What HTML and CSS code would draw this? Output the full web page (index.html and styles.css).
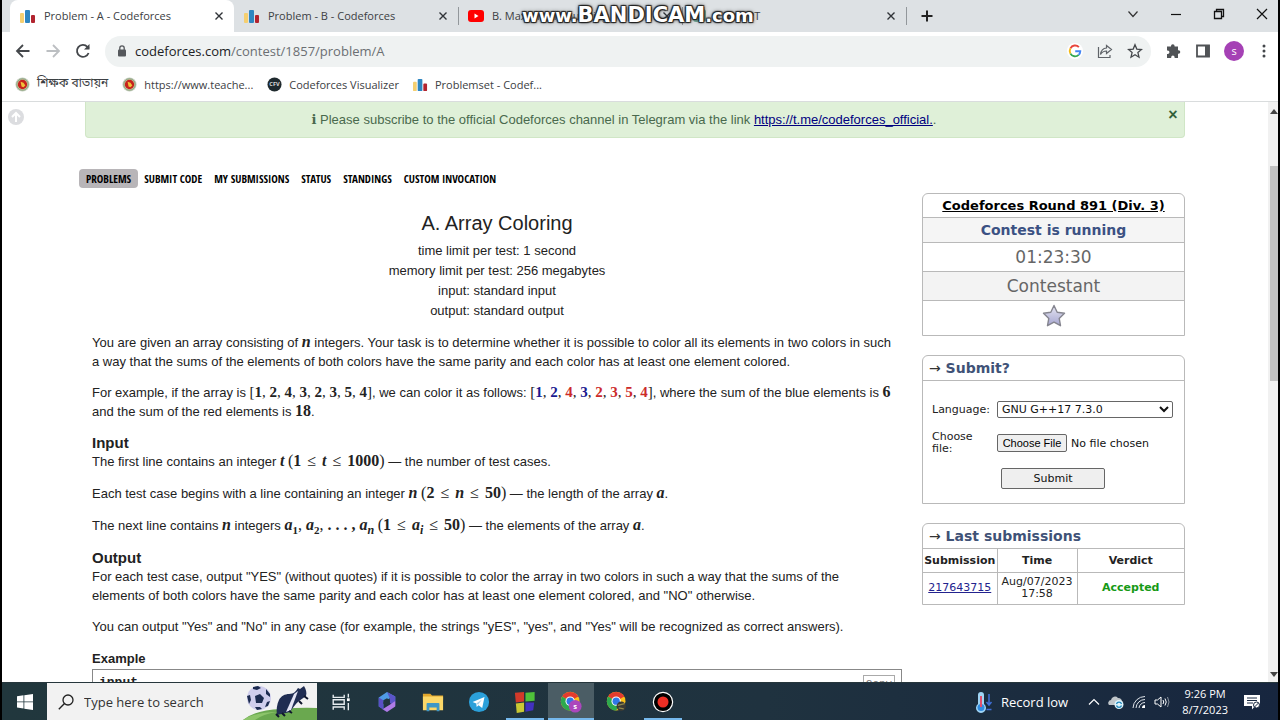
FILE: index.html
```html
<!doctype html>
<html lang="en">
    <head>
        <title>Problem - A - Codeforces</title>
        <meta charset="utf-8">
        <link rel="stylesheet" href="styles.css">
    </head>

    <body>
        <!-- shared icons -->
        <svg class="defs" width="0" height="0">
            <symbol id="cf" viewBox="0 0 16 16">
                <rect x="0" y="5" width="4" height="10" rx="1" fill="#f5cf70"/>
                <rect x="5" y="2" width="5" height="13" rx="1" fill="#2e86c1"/>
                <rect x="11" y="7" width="4" height="8" rx="1" fill="#b2242f"/>
            </symbol>
            <symbol id="close" viewBox="0 0 10 10">
                <path d="M1.5 1.5l7 7M8.5 1.5l-7 7" stroke="#303338" stroke-width="1.4" fill="none"/>
            </symbol>
            <symbol id="gov" viewBox="0 0 16 16">
                <circle cx="8" cy="8" r="7.5" fill="#c3cbbb"/>
                <circle cx="8" cy="8" r="6" fill="#e0d8b0" stroke="#7a9a6e" stroke-width="1"/>
                <circle cx="8" cy="8" r="5" fill="#c6231d"/>
                <path d="M6 5l3 1 2 3-2 2-2-1z" fill="#f0c23a"/>
            </symbol>
            <symbol id="chrome" viewBox="0 0 24 24">
                <circle cx="12" cy="12" r="11" fill="#fbc116"/>
                <path d="M12 12L2.5 6.5A11 11 0 0 1 21.5 6.5z" fill="#e33b2e"/>
                <path d="M12 12L2.5 6.5A11 11 0 0 0 12 23l4.5-8z" fill="#2da94f"/>
                <path d="M12 6.5h9.5" stroke="#e33b2e" stroke-width="1"/>
                <circle cx="12" cy="12" r="5.5" fill="#fff"/>
                <circle cx="12" cy="12" r="4.3" fill="#3078e8"/>
            </symbol>
        </svg>

        <div class="tabs">
            <div class="tab active">
                <svg class="fav"><use href="#cf"/></svg>
                <span>Problem - A - Codeforces</span>
                <button aria-label="Close tab"><svg><use href="#close"/></svg></button>
            </div>
            <div class="tab">
                <svg class="fav"><use href="#cf"/></svg>
                <span>Problem - B - Codeforces</span>
                <button aria-label="Close tab"><svg><use href="#close"/></svg></button>
            </div>
            <div class="tab line">
                <svg class="fav" viewBox="0 0 16 16"><rect y="2" width="16" height="12" rx="3" fill="#f00"/><path d="M6.5 5.5v5l4-2.5z" fill="#fff"/></svg>
                <span>B. Maximum Rounding</span>
                <button aria-label="Close tab"><svg><use href="#close"/></svg></button>
            </div>
            <div class="tab line">
                <svg class="fav" viewBox="0 0 16 16"><rect x="1" y="1" width="13" height="13" rx="3" fill="#6fa593"/></svg>
                <span>ChatGPT</span>
                <button aria-label="Close tab"><svg><use href="#close"/></svg></button>
            </div>
            <button class="newtab line" aria-label="New tab"><svg width="12" height="12" viewBox="0 0 12 12"><path d="M6 .5v11M.5 6h11" stroke="#222" stroke-width="2"/></svg></button>
            <div class="wincontrols">
                <svg viewBox="0 0 12 12"><path d="M1.5 3.5L6 8.5l4.5-5" fill="none" stroke="#333" stroke-width="1.2"/></svg>
                <svg viewBox="0 0 12 12"><path d="M1 6.5h10" stroke="#111" stroke-width="1.2"/></svg>
                <svg viewBox="0 0 12 12"><path d="M3.5 3.5V1.5h7v7h-2M1.5 3.5h7v7h-7z" fill="none" stroke="#111" stroke-width="1.3"/></svg>
                <svg viewBox="0 0 12 12"><path d="M1 1l10 10M11 1L1 11" fill="none" stroke="#111" stroke-width="1.2"/></svg>
            </div>
            <div class="watermark">www.<b>BANDICAM</b>.com</div>
        </div>

        <div class="toolbar">
            <svg class="nav" viewBox="0 0 16 16"><path d="M14.5 8H2M8 2L2 8l6 6" fill="none" stroke="#44474b" stroke-width="1.8"/></svg>
            <svg class="nav" viewBox="0 0 16 16"><path d="M1.5 8H14M8 2l6 6-6 6" fill="none" stroke="#bcbfc2" stroke-width="1.8"/></svg>
            <svg class="nav" viewBox="0 0 16 16"><path d="M13.6 10A6 6 0 1 1 12.4 3.8L14 5.5" fill="none" stroke="#44474b" stroke-width="1.8"/><path d="M14.5 1v5.5H9z" fill="#44474b"/></svg>
            <div class="omnibox">
                <div class="url">
                    <svg class="lock" viewBox="0 0 10 12"><rect x="1" y="4.5" width="8" height="7" rx="1" fill="#55585c"/><path d="M2.8 5V3a2.2 2.2 0 0 1 4.4 0v2" fill="none" stroke="#55585c" stroke-width="1.3"/></svg>
                    <div>codeforces.com<span>/contest/1857/problem/A</span></div>
                </div>
                <svg viewBox="0 0 14 14"><circle cx="7" cy="7" r="7" fill="#fff"/>
                    <g fill="none" stroke-width="1.7"><path d="M10.4 3.6A4.6 4.6 0 0 0 3 4.7" stroke="#e8453c"/><path d="M3 4.7A4.6 4.6 0 0 0 3 9.3" stroke="#f5b912"/><path d="M3 9.3A4.6 4.6 0 0 0 10.2 10.4" stroke="#34a853"/><path d="M10.2 10.4A4.6 4.6 0 0 0 11.6 7.2H7.2" stroke="#4285f4"/></g></svg>
                <svg viewBox="0 0 16 16"><path d="M1.5 4v10.5h11.5V12" fill="none" stroke="#5f6368" stroke-width="1.2"/><path d="M9.5 2.5l5 4-5 4V8C7 8 5 9 3.5 11.5 4 7.5 6 5.2 9.5 5z" fill="none" stroke="#5f6368" stroke-width="1.2"/></svg>
                <svg viewBox="0 0 16 16"><path d="M8 1.8l1.8 4.3 4.7.4-3.6 3.1 1.1 4.6L8 11.7l-4 2.5 1.1-4.6L1.5 6.5l4.7-.4z" fill="none" stroke="#44474b" stroke-width="1.3"/></svg>
            </div>
            <svg class="act" viewBox="0 0 16 16"><path d="M6 3a1.8 1.8 0 0 1 3.6 0v.5H13v3.7h.5a1.8 1.8 0 0 1 0 3.6H13V15H9.6v-.8a1.7 1.7 0 0 0-3.4 0v.8H2v-4h.7a1.7 1.7 0 0 0 0-3.5H2v-4h4z" fill="#505356"/></svg>
            <svg class="act" viewBox="0 0 16 16"><path d="M2 2.5h12v11H2z" fill="none" stroke="#505356" stroke-width="1.8"/><path d="M10 2h4.5v12H10z" fill="#505356"/></svg>
            <button class="avatar">s</button>
            <svg class="dots" viewBox="0 0 4 14"><g fill="#44474b"><circle cx="2" cy="2" r="1.5"/><circle cx="2" cy="7" r="1.5"/><circle cx="2" cy="12" r="1.5"/></g></svg>
        </div>

        <div class="bookmarks">
            <a href="#"><svg><use href="#gov"/></svg><span class="bn">শিক্ষক বাতায়ন</span></a>
            <a href="#"><svg><use href="#gov"/></svg>https://www.teache...</a>
            <a href="#"><svg viewBox="0 0 16 16"><circle cx="8" cy="8" r="7.5" fill="#1f2a2e"/><text x="8" y="10" text-anchor="middle" font-size="6" font-weight="bold" fill="#ddd">CFV</text></svg>Codeforces Visualizer</a>
            <a href="#"><svg><use href="#cf"/></svg>Problemset - Codef...</a>
        </div>

        <div class="view">
            <svg class="totop" width="16" height="16" viewBox="0 0 16 16"><circle cx="8" cy="8" r="8" fill="#dcdde0"/><path d="M8 13V4M4 8l4-4 4 4" fill="none" stroke="#fff" stroke-width="2"/></svg>
            <div class="page">
                <div class="notice">
                    <p><i>i</i> Please subscribe to the official Codeforces channel in Telegram via the link <a href="#">https://t.me/codeforces_official.</a>.</p>
                    <button aria-label="Close notice">×</button>
                </div>

                <nav class="menu">
                    <a href="#" class="current">PROBLEMS</a>
                    <a href="#">SUBMIT CODE</a>
                    <a href="#">MY SUBMISSIONS</a>
                    <a href="#">STATUS</a>
                    <a href="#">STANDINGS</a>
                    <a href="#">CUSTOM INVOCATION</a>
                </nav>

                <div class="columns">
                    <main class="problem">
                        <div class="head">
                            <h1>A. Array Coloring</h1>
                            <div>time limit per test: 1 second</div>
                            <div>memory limit per test: 256 megabytes</div>
                            <div>input: standard input</div>
                            <div>output: standard output</div>
                        </div>
                        <p>You are given an array consisting of <var>n</var> integers. Your task is to determine whether it is possible to color all its elements in two colors in such<br>a way that the sums of the elements of both colors have the same parity and each color has at least one element colored.</p>
                        <p>For example, if the array is <span class="m list">[<b>1</b>, <b>2</b>, <b>4</b>, <b>3</b>, <b>2</b>, <b>3</b>, <b>5</b>, <b>4</b>]</span>, we can color it as follows: <span class="m list">[<b class="blue">1</b>, <b class="blue">2</b>, <b class="red">4</b>, <b class="blue">3</b>, <b class="red">2</b>, <b class="red">3</b>, <b class="red">5</b>, <b class="red">4</b>]</span>, where the sum of the blue elements is <b class="m">6</b><br>and the sum of the red elements is <b class="m">18</b>.</p>
                        <section class="input">
                            <h2>Input</h2>
                            <p>The first line contains an integer <var>t</var> <span class="m">(<b>1</b> <i>≤</i> <var>t</var> <i>≤</i> <b>1000</b>)</span> — the number of test cases.</p>
                            <p>Each test case begins with a line containing an integer <var>n</var> <span class="m">(<b>2</b> <i>≤</i> <var>n</var> <i>≤</i> <b>50</b>)</span> — the length of the array <var>a</var>.</p>
                            <p>The next line contains <var>n</var> integers <span class="m"><var>a</var><sub>1</sub>, <var>a</var><sub>2</sub>, <b>. . . ,</b> <var>a</var><sub><var>n</var></sub></span> <span class="m">(<b>1</b> <i>≤</i> <var>a</var><sub><var>i</var></sub> <i>≤</i> <b>50</b>)</span> — the elements of the array <var>a</var>.</p>
                        </section>
                        <section>
                            <h2>Output</h2>
                            <p>For each test case, output "YES" (without quotes) if it is possible to color the array in two colors in such a way that the sums of the<br>elements of both colors have the same parity and each color has at least one element colored, and "NO" otherwise.</p>
                            <p>You can output "Yes" and "No" in any case (for example, the strings "yES", "yes", and "Yes" will be recognized as correct answers).</p>
                        </section>
                        <h3>Example</h3>
                        <div class="sample">
                            <span>input</span>
                            <button>Copy</button>
                        </div>
                    </main>

                    <aside>
                        <div class="box contest">
                            <div class="name"><a href="#">Codeforces Round 891 (Div. 3)</a></div>
                            <div class="state">Contest is running</div>
                            <div class="big">01:23:30</div>
                            <div class="big gray">Contestant</div>
                            <div class="star"><svg width="24" height="24" viewBox="0 0 24 24"><defs><linearGradient id="sg" x2="0" y2="1"><stop offset="0" stop-color="#e6e6f2"/><stop offset="1" stop-color="#a5a5d0"/></linearGradient></defs><path d="M12 1.5l3.2 6.8 7.3 1-5.3 5.1 1.3 7.3L12 18.2l-6.5 3.5 1.3-7.3L1.5 9.3l7.3-1z" fill="url(#sg)" stroke="#85858f" stroke-width="1.4" stroke-linejoin="round"/></svg></div>
                        </div>

                        <div class="box">
                            <div class="caption"><span>→</span> Submit?</div>
                            <form class="submit">
                                <label for="lang">Language:</label>
                                <select id="lang"><option>GNU G++17 7.3.0</option></select>
                                <label for="file">Choose file:</label>
                                <input type="file" id="file">
                                <button type="button">Submit</button>
                            </form>
                        </div>

                        <div class="box">
                            <div class="caption"><span>→</span> Last submissions</div>
                            <table>
                                <tr><th class="c1">Submission</th><th class="c2">Time</th><th>Verdict</th></tr>
                                <tr><td><a href="#">217643715</a></td><td>Aug/07/2023 17:58</td><td class="ok">Accepted</td></tr>
                            </table>
                        </div>
                    </aside>
                </div>
            </div>
            <div class="scrollbar">
                <svg viewBox="0 0 8 5"><path d="M0 5l4-5 4 5z" fill="#444"/></svg>
                <div class="track"><div class="thumb"></div></div>
                <svg viewBox="0 0 8 5"><path d="M0 0l4 5 4-5z" fill="#444"/></svg>
            </div>
        </div>

        <div class="taskbar">
            <button class="start" aria-label="Start"><svg width="16" height="16" viewBox="0 0 16 16"><path d="M0 2.3l6.5-1v6.2H0zM7.3 1.2L16 0v7.5H7.3zM0 8.3h6.5v6.2L0 13.6zM7.3 8.3H16V16l-8.7-1.3z" fill="#fff"/></svg></button>
            <div class="search">
                <svg width="16" height="16" viewBox="0 0 16 16"><circle cx="10" cy="6" r="5" fill="none" stroke="#222" stroke-width="1.3"/><path d="M6.5 9.5L.8 15.3" stroke="#222" stroke-width="1.4"/></svg>
                <input type="text" placeholder="Type here to search" aria-label="Search">
                <!-- football and boot on the grass -->
                <svg width="74" height="37" viewBox="0 0 74 37">
                    <path d="M0 37Q12 27 38 26 60 24 74 25v12z" fill="#6aa84f"/>
                    <path d="M0 37Q12 29 34 29 20 31 12 37z" fill="#8cc46a"/>
                    <circle cx="16" cy="15" r="12" fill="#cfcdec"/>
                    <g fill="#1c2b50"><path d="M12 13l5-2 4 4-2 5h-6zM10 4l5-1 3 2-4 2-4-1zM23 6l4 5v3l-4-3zM4 13l3-1 1 5-2 4zM12 24l5 0 2 2-5 1zM24 19l3-1-2 5-3 1z"/></g>
                    <path d="M36 17c2-4 6-6 10-6 5 0 7-3 9-6l2 1 4-3c2 3 3 7 2 10l-7 5c-4 3-6 7-9 11l-13 3c-1-5 0-11 2-15z" fill="#202d52"/>
                    <path d="M43 29l8-18 4-3-7 19z" fill="#e4e4f4"/>
                    <path d="M33 31l3 3M39 30l3 3M46 28l3 2M56 18l3 3M61 13l4 3" stroke="#10172d" stroke-width="2"/>
                </svg>
            </div>
            <div class="apps">
                <div class="app"><svg viewBox="0 0 24 24"><path d="M3.5 4v3h12V4M3.5 20.5v-3h12v3M3.5 9.5h12v5h-12zM20 3v4M20 13v8" fill="none" stroke="#e8edf0" stroke-width="1.5"/><rect x="18.5" y="8" width="3" height="3" fill="#fff"/></svg></div>
                <div class="app"><svg viewBox="0 0 24 24"><path d="M12 1l9 5v5l-6-3-7 4v8l-5-3V7z" fill="#4f9be6"/><path d="M12 1l9 5v10l-6-3V8z" fill="#5b54c8"/><path d="M21 11v6l-9 6-5-3 8-5z" fill="#b07be6"/><path d="M3 7l5 3v10l4 3-9-6z" fill="#5a4fc4"/><path d="M8 10l4-2 3 2v4l-3 2-4-2z" fill="#22353f"/></svg></div>
                <div class="app"><svg viewBox="0 0 24 24"><path d="M1 3h8l2 2h12v5H1z" fill="#e2a72c"/><rect x="1" y="6" width="22" height="15" fill="#fbd768"/><path d="M5 22v-8q0-1 1-1h12q1 0 1 1v8h-3v-4H8v4z" fill="#3f97c6"/></svg></div>
                <div class="app"><svg viewBox="0 0 24 24"><circle cx="12" cy="12" r="11" fill="#2ba0da"/><path d="M5 12l13-5.5-2.5 12-4-3-2 2-.5-4z" fill="#fff"/><path d="M9 13.5l6-4-4 5.5z" fill="#a8cfe6"/></svg></div>
                <div class="app open"><svg viewBox="0 0 24 24"><path d="M1 2l10-1v10.5l-9 1z" fill="#d23a2a"/><path d="M12.5 2l10-1v9.5l-10 1z" fill="#4fc23a"/><path d="M2 13.5l9-1v10L3 24z" fill="#c9c934"/><path d="M12.5 12.5h9.5l-1 8.5-8.500 1.500z" fill="#4231c0"/></svg></div>
                <div class="app open on"><svg viewBox="0 0 26 26"><use href="#chrome" width="24" height="24"/><circle cx="18" cy="18" r="7.5" fill="#ab47bc"/><text x="18" y="21" text-anchor="middle" font-size="9" font-weight="bold" fill="#fff">s</text></svg></div>
                <div class="app"><svg viewBox="0 0 26 26"><use href="#chrome" width="24" height="24"/><circle cx="18" cy="18" r="5.5" fill="#3b3a34"/><path d="M14 17l8-2M15 20l6 1" stroke="#8f874d" stroke-width="1.5"/></svg></div>
                <div class="app open"><svg viewBox="0 0 24 24"><circle cx="12" cy="12" r="10.5" fill="#000" stroke="#fff" stroke-width="1.3"/><circle cx="12" cy="12" r="6" fill="#ee2e24"/></svg></div>
            </div>
            <div class="tray">
                <svg width="18" height="22" viewBox="0 0 18 22"><path d="M3 4a3 3 0 0 1 6 0v9a5 5 0 1 1-6 0z" fill="#9fd4f4"/><circle cx="6" cy="16.5" r="3.5" fill="#2f8be0"/><path d="M6 5v11" stroke="#e05070" stroke-width="2"/><path d="M14 3v11M11.5 11l2.5 3 2.5-3M11.5 18.5h5" fill="none" stroke="#3f6fd8" stroke-width="1.5"/></svg>
                <span class="weather">Record low</span>
                <svg width="12" height="12" viewBox="0 0 12 12"><path d="M1 8.5l5-5 5 5" fill="none" stroke="#fff" stroke-width="1.2"/></svg>
                <svg width="16" height="16" viewBox="0 0 16 16"><path d="M1 11a3 3 0 0 1 2-5 4 4 0 0 1 7-2 4 4 0 0 1 4 4v3z" fill="#bfc5c9"/><circle cx="11" cy="10.5" r="4.5" fill="#dff3fa"/><path d="M8.5 10a2.6 2.6 0 0 1 5 0M13.5 11.5a2.6 2.6 0 0 1-5 0" fill="none" stroke="#1b86bb" stroke-width="1.3"/></svg>
                <svg width="14" height="14" viewBox="0 0 14 14"><g fill="none" stroke="#dfe4ea"><path d="M1 13A12 12 0 0 1 13 1.5M4 13a9 9 0 0 1 9-8.5M7 13a6 6 0 0 1 6-5.5"/></g><path d="M10 13a3 3 0 0 1 3-3v3z" fill="#fff"/></svg>
                <svg width="16" height="14" viewBox="0 0 16 14"><path d="M1 5h2.5L7 2v10L3.5 9H1z" fill="none" stroke="#fff"/><g fill="none" stroke="#fff"><path d="M9 5q1.5 2 0 4M11 3.5q2.5 3.5 0 7"/><path d="M13.5 2q3 5 0 10" opacity=".5"/></g></svg>
                <div class="clock">9:26 PM<br>8/7/2023</div>
                <svg width="16" height="16" viewBox="0 0 16 16"><path d="M0 1h16v11h-5l-3 3.5V12H0z" fill="#fff"/><path d="M3 4h10M3 6.5h10M3 9h6" stroke="#1a2a42"/><circle cx="12.5" cy="11" r="3" fill="#fff" stroke="#1a2a42"/><path d="M10.5 13l4-4" stroke="#1a2a42"/></svg>
            </div>
        </div>
    </body>
</html>
```
FILE: styles.css
```css
*{margin:0;padding:0;box-sizing:border-box;}
body{
    display:flex;
    flex-direction:column;
    height:100vh;
    overflow:hidden;
    padding:0 2px;
    background:#000;
    font-family:"Liberation Sans",Arial,sans-serif;
    font-size:13px;
    color:#222;
}
button{border:0;background:none;font-family:inherit;}
svg{flex:none;}
.defs{position:absolute;}

/* browser */
.tabs,.toolbar,.bookmarks,.taskbar{
    font-family:"Open Sans","Noto Sans",sans-serif;
    flex:none;
    display:flex;
    align-items:center;
}
.tabs{
    position:relative;
    height:32px;
    background:#dde1e4;
    padding-left:8px;
    font-size:11px;
    color:#3c4043;
}
.tab{
    display:flex;
    align-items:center;
    gap:8px;
    width:224px;
    height:32px;
    padding:0 10px 1px;
}
.tab.active{background:#fff;border-radius:8px 8px 0 0;}
.tab span{flex:1;white-space:nowrap;overflow:hidden;}
.tab button,.tab button svg{width:10px;height:10px;display:block;}
.fav{width:16px;height:16px;}
.line{background:linear-gradient(#92979b,#92979b) no-repeat left center/1px 18px;}
.newtab{width:42px;height:32px;display:flex;align-items:center;justify-content:center;}
.wincontrols{
    margin-left:auto;
    margin-right:10px;
    display:flex;
    gap:31px;
    padding-bottom:4px;
}
.wincontrols svg{width:12px;height:12px;}
.watermark{
    position:absolute;
    left:520px;
    top:4px;
    font:bold 18px/22px "DejaVu Sans",sans-serif;
    color:#fff;
    text-shadow:1px 1px 1px #222,-1px -1px 1px #222,1px -1px 1px #222,-1px 1px 1px #222,0 0 4px #333;
}
.watermark b{font-size:21px;}
.toolbar{
    height:38px;
    background:#fff;
    padding:0 9px 0 13px;
}
.nav{width:16px;height:16px;margin-right:14px;}
.omnibox{
    flex:1;
    display:flex;
    align-items:center;
    gap:14px;
    height:31px;
    padding:0 8px 0 12px;
    border-radius:16px;
    background:#eff2f2;
}
.omnibox svg{width:16px;height:16px;}
.omnibox .lock{width:10px;height:14px;}
.url{
    flex:1;
    display:flex;
    align-items:center;
    gap:8px;
    font-size:13px;
    color:#202124;
}
.url span{color:#6b6f73;}
.act{width:16px;height:16px;margin-left:14px;}
.avatar{
    width:20px;
    height:20px;
    margin:0 18px 0 13px;
    border-radius:10px;
    background:#a541b5;
    color:#fff;
    font-size:11px;
    line-height:18px;
}
.dots{width:4px;height:14px;margin-right:3px;}
.bookmarks{
    height:32px;
    padding:0 13px 3px;
    gap:14px;
    background:#fff;
    border-bottom:1px solid #d9dcdd;
    font-size:11px;
}
.bookmarks a{display:flex;align-items:center;gap:7px;color:#3c4043;text-decoration:none;}
.bookmarks svg{width:15px;height:15px;}
.bn{font-family:"Noto Sans Bengali","Noto Sans",sans-serif;font-size:12px;}

/* page */
.view{
    position:relative;
    flex:1;
    display:flex;
    min-height:0;
    overflow:hidden;
    background:#fff;
}
.totop{position:absolute;left:6px;top:7px;}
.page{flex:1;max-width:1100px;margin:0 auto;}
.notice{
    display:flex;
    height:36px;
    background:#dff0d8;
    border:1px solid #d0e6c6;
    border-top:0;
    border-radius:0 0 4px 4px;
    color:#49694d;
}
.notice p{flex:1;text-align:center;line-height:36px;}
.notice i{font:bold 13px "DejaVu Serif",serif;}
.notice a{color:#00007f;}
.notice button{width:22px;height:26px;color:#33603a;font-size:16px;font-weight:bold;}
.menu{
    display:flex;
    margin:31px 0 5px -6px;
    font:bold 11px/19px "Liberation Sans Narrow","Open Sans Condensed","DejaVu Sans Condensed",sans-serif;
}
.menu a{padding:0 6px;color:#000;text-decoration:none;}
.menu .current{padding:0 7px;background:#b8b5b8;border-radius:4px;}
.columns{
    display:grid;
    grid-template-columns:1fr 263px;
    gap:20px;
}
.problem{padding:18px 0 0 7px;line-height:19px;white-space:nowrap;min-width:0;}
.head{text-align:center;line-height:20px;margin-bottom:12px;}
h1{font-size:20px;line-height:24px;font-weight:normal;margin-bottom:6px;}
.problem p{margin-bottom:12px;}
.problem .input p{margin-bottom:13px;}
h2{font-size:15px;line-height:19px;}
h3{font-size:13px;line-height:19px;margin-top:13px;}
.problem section{margin-top:12px;}
.m,var{font-family:"Liberation Serif","Times New Roman",serif;font-size:16px;line-height:16px;}
.list{font-size:15px;}
var{font-weight:bold;font-style:italic;}
.m i{font-style:normal;padding:0 2px;}
.m sub{font-size:11px;font-weight:bold;line-height:0;}
.m sub var{font-size:12px;line-height:0;}
.blue{color:#1a1a90;}
.red{color:#cc2a2a;}
.sample{
    display:flex;
    justify-content:space-between;
    border:1px solid #888;
    padding:5px 6px;
    height:60px;
    margin-top:1px;
    font:bold 13px/16px "Liberation Mono",monospace;
}
.sample button{height:18px;width:32px;border:1px solid #aaa;font-size:11px;color:#777;}
.box{
    border:1px solid #b9b9b9;
    border-radius:6px 6px 0 0;
    margin-bottom:19px;
    font-family:"DejaVu Sans",Verdana,sans-serif;
    font-size:11px;
    color:#222;
}
.contest{text-align:center;}
.contest div+div{border-top:1px solid #b9b9b9;}
.name{font-size:13px;font-weight:bold;line-height:23px;}
.name a{color:#000;}
.contest .state{font-size:14px;font-weight:bold;line-height:24px;background:#f5f5f5;color:#3b5183;}
.big{font-size:17px;line-height:28px;color:#666;}
.gray{background:#f3f3f3;}
.star{height:35px;padding-top:3px;}
.caption{
    height:25px;
    line-height:24px;
    padding-left:6px;
    border-bottom:1px solid #b9b9b9;
    font-size:14px;
    font-weight:bold;
    color:#3f5277;
}
.caption span{font-weight:normal;color:#333;}
.submit{
    display:grid;
    grid-template-columns:56px 1fr;
    column-gap:9px;
    row-gap:13px;
    align-items:center;
    padding:20px 11px 14px 9px;
}
.submit label{line-height:12px;}
.submit select,.submit input,.submit button{font-family:inherit;font-size:11px;color:#111;}
.submit select{height:17px;border:1px solid #666;border-radius:2px;background:#fff;}
.submit input{width:100%;}
.submit input::file-selector-button{
    height:18px;
    width:70px;
    padding:0;
    border:1px solid #666;
    border-radius:2px;
    background:#efefef;
    font:11px "Liberation Sans",Arial,sans-serif;
}
.submit button{
    grid-column:2;
    width:104px;
    height:21px;
    margin-left:4px;
    border:1px solid #666;
    border-radius:2px;
    background:#efefef;
}
table{width:100%;border-collapse:collapse;text-align:center;}
th{height:23px;}
td{height:32px;line-height:12px;border-top:1px solid #b9b9b9;}
th+th,td+td{border-left:1px solid #b9b9b9;}
.c1{width:74px;}
.c2{width:80px;}
td a{color:#23238e;}
.ok{color:#169a16;font-weight:bold;}
.scrollbar{
    width:10px;
    display:flex;
    flex-direction:column;
    align-items:flex-end;
    padding:7px 0 5px;
    background:#f1f1f1;
}
.scrollbar svg{width:8px;height:5px;}
.track{flex:1;width:100%;padding:52px 0 0 2px;}
.thumb{height:215px;background:#c1c1c1;}

/* taskbar */
.taskbar{
    height:38px;
    background:linear-gradient(90deg,#21373d,#1f323f 60%,#17263f);
    border-top:1px solid #26363c;
    color:#fff;
}
.start{width:45px;height:37px;}
.start svg{display:block;margin:auto;}
.search{
    display:flex;
    align-items:center;
    width:270px;
    height:37px;
    padding-left:11px;
    background:#f2f2f2;
}
.search input{
    flex:1;
    min-width:0;
    padding-left:10px;
    border:0;
    background:none;
    font:13px "Open Sans","Noto Sans",sans-serif;
}
.search input::placeholder{color:#333;}
.apps{display:flex;padding-left:1px;}
.app{
    width:46px;
    height:37px;
    display:flex;
    align-items:center;
    justify-content:center;
}
.app svg{width:22px;height:22px;}
.open{background:linear-gradient(#76b9ed,#76b9ed) no-repeat center bottom/38px 2px;}
.on{background-color:#4b5d65;background-size:46px 2px;}
.tray{
    display:flex;
    align-items:center;
    gap:8px;
    margin-left:auto;
    padding-right:18px;
}
.weather{font-size:13px;margin-right:12px;}
.clock{font-size:11px;line-height:16px;text-align:center;margin:0 8px 0 4px;}
```
